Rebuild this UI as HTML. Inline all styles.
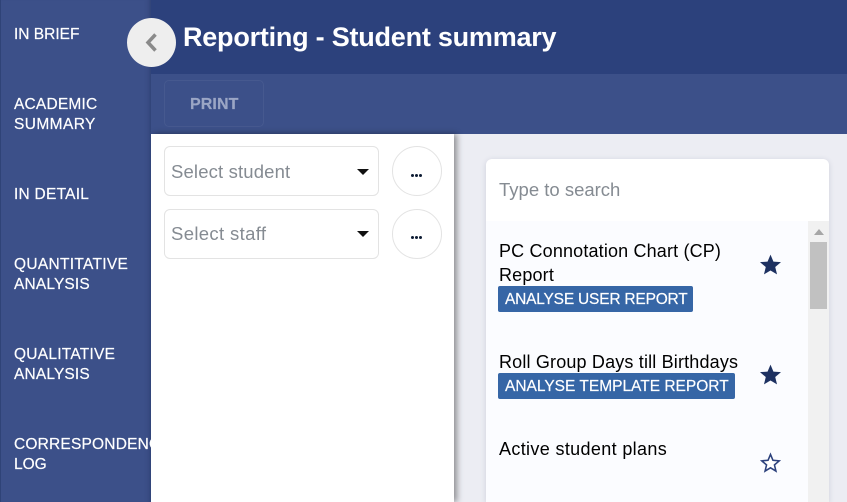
<!DOCTYPE html>
<html><head><meta charset="utf-8"><style>
html,body{margin:0;padding:0;width:847px;height:502px;overflow:hidden;background:#ecedf3;font-family:"Liberation Sans",sans-serif}
div,span{position:absolute;white-space:nowrap}
.a{position:absolute}
.nav{left:14px;color:#fff;font-size:15.5px;line-height:20px;font-weight:400;-webkit-text-stroke:.2px #fff}
.sel{left:164px;width:213px;height:48px;background:#fff;border:1px solid #e3e3e3;border-radius:6px}
.ph{color:#858b92;font-size:18.5px;line-height:24px}
.tri{width:0;height:0;border-left:6px solid transparent;border-right:6px solid transparent;border-top:6px solid #111}
.circ{left:392px;width:48px;height:48px;background:#fff;border:1px solid #e3e3e3;border-radius:50%}
.dots{width:3px;height:3px;background:#0d1b33;border-radius:50%;box-shadow:4px 0 0 #0d1b33,8px 0 0 #0d1b33}
.t{left:499px;color:#000;font-size:18px;line-height:23px}
.tag{left:498px;height:26px;background:#3666a6;border-radius:2px;color:#fff;font-size:15.5px;line-height:26px;-webkit-text-stroke:.2px #fff}
</style></head><body>
<div style="left:151px;top:0;width:696px;height:74px;background:#2c417c"></div>
<div style="left:151px;top:74px;width:696px;height:60px;background:#3c5089"></div>
<div style="left:164px;top:80px;width:98px;height:45px;border:1px solid #46598f;border-radius:5px"></div>
<div style="left:190px;top:95px;color:#9ba6c5;font-size:16px;line-height:20px;font-weight:700;letter-spacing:.1px;-webkit-text-stroke:.2px #9ba6c5">PRINT</div>
<div style="left:183px;top:20px;color:#fff;font-size:27px;line-height:34px;font-weight:700;letter-spacing:-.23px">Reporting - Student summary</div>

<div style="left:151px;top:134px;width:303px;height:368px;background:#fff;box-shadow:3px 0 6px rgba(0,0,0,.4)"></div>

<div style="left:0;top:0;width:151px;height:502px;background:#3c5089;box-shadow:inset 1px 0 0 #2f4377,inset -6px 0 6px -6px rgba(20,30,70,.5);overflow:hidden">
<div class="nav" style="top:25px;letter-spacing:0">IN BRIEF</div>
<div class="nav" style="top:95px;letter-spacing:.2px">ACADEMIC</div>
<div class="nav" style="top:115px;letter-spacing:.4px">SUMMARY</div>
<div class="nav" style="top:185px;letter-spacing:.25px">IN DETAIL</div>
<div class="nav" style="top:255px;letter-spacing:.3px">QUANTITATIVE</div>
<div class="nav" style="top:275px;letter-spacing:.15px">ANALYSIS</div>
<div class="nav" style="top:345px;letter-spacing:.25px">QUALITATIVE</div>
<div class="nav" style="top:365px;letter-spacing:.15px">ANALYSIS</div>
<div class="nav" style="top:435px;letter-spacing:.2px">CORRESPONDENCE</div>
<div class="nav" style="top:455px">LOG</div>
</div>

<div style="left:127px;top:18px;width:49px;height:49px;border-radius:50%;background:#eeeeee">
<svg class="a" style="position:absolute;left:0;top:0" width="49" height="49"><path d="M28.500 16.500 L21 24.500 L28.500 32.500" fill="none" stroke="#8a8a8a" stroke-width="3.500"/></svg>
</div>

<div class="sel" style="top:146px"></div>
<div class="ph" style="left:171px;top:160px;letter-spacing:.15px">Select student</div>
<div class="tri" style="left:357px;top:169px"></div>
<div class="circ" style="top:146px"></div>
<div class="dots" style="left:411px;top:174px"></div>
<div class="sel" style="top:209px"></div>
<div class="ph" style="left:171px;top:222px;letter-spacing:.35px">Select staff</div>
<div class="tri" style="left:357px;top:231px"></div>
<div class="circ" style="top:209px"></div>
<div class="dots" style="left:411px;top:236px"></div>

<div style="left:486px;top:159px;width:343px;height:343px;background:#fff;border-radius:6px 6px 0 0;box-shadow:0 1px 6px rgba(40,50,90,.15)"></div>
<div class="ph" style="left:499px;top:178px;font-size:18.5px">Type to search</div>
<div style="left:486px;top:221px;width:322px;height:281px;background:#fbfcff"></div>
<div style="left:808px;top:221px;width:21px;height:281px;background:#f1f1f1"></div>
<div style="left:810px;top:242px;width:17px;height:67px;background:#c1c1c1"></div>
<div style="left:814px;top:229px;width:0;height:0;border-left:5px solid transparent;border-right:5px solid transparent;border-bottom:6px solid #a6a6a6"></div>

<div class="t" style="top:240px;letter-spacing:.16px">PC Connotation Chart (CP)</div>
<div class="t" style="top:264px;letter-spacing:.16px">Report</div>
<div class="tag" style="top:286px;width:195px"><span style="left:7px;top:1px;letter-spacing:-.2px">ANALYSE USER REPORT</span></div>
<div class="t" style="top:351px;letter-spacing:.17px">Roll Group Days till Birthdays</div>
<div class="tag" style="top:373px;width:237px"><span style="left:7px;top:1px">ANALYSE TEMPLATE REPORT</span></div>
<div class="t" style="top:438px;letter-spacing:.35px">Active student plans</div>

<svg class="a" style="position:absolute;left:760px;top:254px" width="21" height="21" viewBox="0.9 1 22.2 22"><path d="M12 1.500l3.100 7.400 8 .6-6.100 5.200 1.900 7.800L12 18.300 5.100 22.500l1.900-7.800L.9 9.500l8-.6z" fill="#1d3161"/></svg>
<svg class="a" style="position:absolute;left:760px;top:364px" width="21" height="21" viewBox="0.9 1 22.2 22"><path d="M12 1.500l3.100 7.400 8 .6-6.100 5.200 1.900 7.800L12 18.300 5.100 22.500l1.900-7.800L.9 9.500l8-.6z" fill="#1d3161"/></svg>
<svg class="a" style="position:absolute;left:760px;top:452px" width="21" height="21" viewBox="0 0 24 24"><path d="M12 2.800l2.800 6.700 7.200.6-5.500 4.700 1.700 7L12 18.100l-6.200 3.700 1.700-7L2 10.100l7.200-.6z" fill="#fff" stroke="#2c417c" stroke-width="1.800"/></svg>
</body></html>
